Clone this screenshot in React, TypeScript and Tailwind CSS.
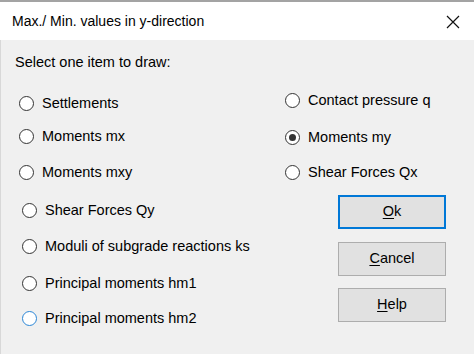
import React from 'react';

const Radio: React.FC<{ label: string; checked?: boolean; focused?: boolean; className?: string }> = ({
  label,
  checked,
  focused,
  className = '',
}) => (
  <label className={`flex items-center h-[16px] gap-[8px] ${className}`}>
    <span
      className={`w-[15px] h-[15px] rounded-full border bg-white flex items-center justify-center shrink-0 ${
        focused ? 'border-[#2b86d6]' : 'border-[#333333]'
      }`}
    >
      {checked && <span className="w-[7px] h-[7px] rounded-full bg-[#333333]" />}
    </span>
    <span className="text-[14.5px] leading-[16px] text-black whitespace-nowrap">{label}</span>
  </label>
);

const Btn: React.FC<{ hot: string; rest: string; primary?: boolean; className?: string }> = ({
  hot,
  rest,
  primary,
  className = '',
}) => (
  <button
    className={`w-[108px] h-[34px] bg-[#e1e1e1] text-[14.5px] text-black flex items-center justify-center ${
      primary ? 'border-2 border-[#0078d7]' : 'border border-[#adadad]'
    } ${className}`}
  >
    <span>
      <span className="underline underline-offset-2">{hot}</span>
      {rest}
    </span>
  </button>
);

export default function App() {
  return (
    <div className="w-[474px] h-[361px] bg-white overflow-hidden" style={{ fontFamily: '"Liberation Sans", Arial, sans-serif' }}>
      <div className="h-[2px] bg-[#a3a3a3]" />
      <div className="h-[38px] flex items-center justify-between pl-[12px] pr-[14px]">
        <span className="text-[14px] text-black">Max./ Min. values in y-direction</span>
        <svg width="14" height="14" viewBox="0 0 14 14" className="mt-[1px]">
          <path d="M1 1 L13 13 M13 1 L1 13" stroke="#111" strokeWidth="1.2" />
        </svg>
      </div>
      <div className="h-[314px] bg-[#f0f0f0] border-l border-[#d8d8d8]">
        <div className="pt-[14px] pl-[14px] text-[14.5px] leading-[16px] text-black">Select one item to draw:</div>
        <div className="flex">
          <div className="w-[284px] shrink-0 pl-[18px] flex flex-col">
            <Radio label="Settlements" className="mt-[25px]" />
            <Radio label="Moments mx" className="mt-[17px]" />
            <Radio label="Moments mxy" className="mt-[20px]" />
            <Radio label="Shear Forces Qy" className="mt-[22px] ml-[3px]" />
            <Radio label="Moduli of subgrade reactions ks" className="mt-[20px] ml-[3px]" />
            <Radio label="Principal moments hm1" className="mt-[21px] ml-[3px]" />
            <Radio label="Principal moments hm2" focused className="mt-[19px] ml-[3px]" />
          </div>
          <div className="flex flex-col">
            <Radio label="Contact pressure q" className="mt-[22px]" />
            <Radio label="Moments my" checked className="mt-[21px]" />
            <Radio label="Shear Forces Qx" className="mt-[19px]" />
            <Btn hot="O" rest="k" primary className="mt-[15px] ml-[53px]" />
            <Btn hot="C" rest="ancel" className="mt-[13px] ml-[53px]" />
            <Btn hot="H" rest="elp" className="mt-[12px] ml-[53px]" />
          </div>
        </div>
      </div>
    </div>
  );
}
